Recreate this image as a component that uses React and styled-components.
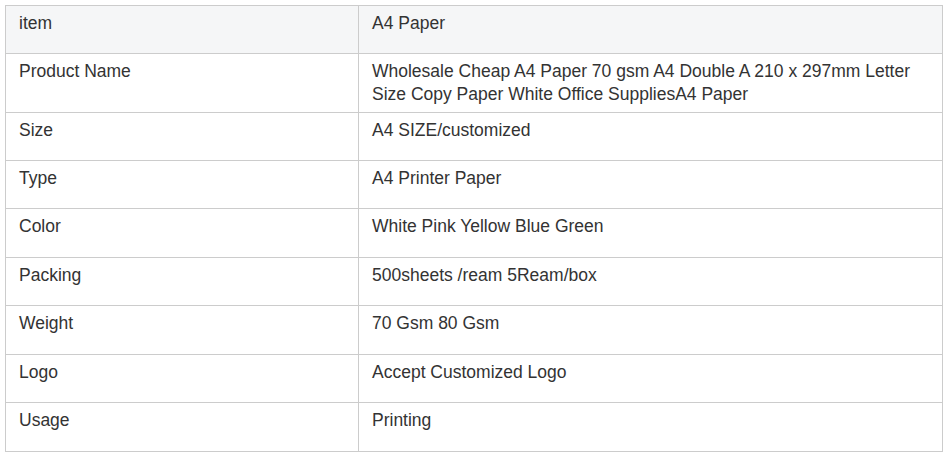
import React from "react";
import styled, { createGlobalStyle } from "styled-components";

const GlobalStyle = createGlobalStyle`
  body {
    margin: 0;
    background: #fff;
  }
`;

const rows = [
  ["Product Name", "Wholesale Cheap A4 Paper 70 gsm A4 Double A 210 x 297mm Letter Size Copy Paper White Office SuppliesA4 Paper"],
  ["Size", "A4 SIZE/customized"],
  ["Type", "A4 Printer Paper"],
  ["Color", "White Pink Yellow Blue Green"],
  ["Packing", "500sheets /ream 5Ream/box"],
  ["Weight", "70 Gsm 80 Gsm"],
  ["Logo", "Accept Customized Logo"],
  ["Usage", "Printing"],
];

const App = () => {
  return (
    <Page>
      <GlobalStyle />
      <Table>
        <Cell $head>item</Cell>
        <Cell $head $last>A4 Paper</Cell>
        {rows.map(([label, value]) => (
          <React.Fragment key={label}>
            <Cell>{label}</Cell>
            <Cell $last>{value}</Cell>
          </React.Fragment>
        ))}
      </Table>
    </Page>
  );
};

export default App;

const Page = styled.div`
  padding: 5px;
`;

const Table = styled.div`
  width: 938px;
  box-sizing: border-box;
  display: grid;
  grid-template-columns: 353px 1fr;
  border: 1px solid #cccccc;
  border-bottom: none;
  font-family: "Liberation Sans", Arial, sans-serif;
  font-size: 17.5px;
  line-height: 22.5px;
  color: #333333;
`;

const Cell = styled.div`
  box-sizing: border-box;
  min-height: ${(p) => (p.$head ? "48px" : "48.45px")};
  padding: 6px 13px 6.5px;
  border-bottom: 1px solid #cccccc;
  border-right: ${(p) => (p.$last ? "none" : "1px solid #cccccc")};
  background: ${(p) => (p.$head ? "#f5f6f7" : "#ffffff")};
`;
